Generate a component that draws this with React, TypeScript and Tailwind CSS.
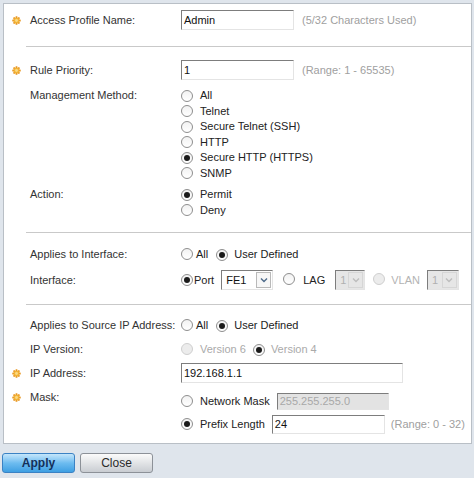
import React from "react"

// required-field marker (small orange sunburst)
function Star() {
  return (
    <svg width="9" height="9" viewBox="0 0 16 16" className="shrink-0">
      <g fill="#e8951e">
        {[0, 45, 90, 135].map((a) => (
          <rect key={a} x="6.3" y="0.5" width="3.4" height="15" rx="1" transform={`rotate(${a} 8 8)`} />
        ))}
      </g>
      <circle cx="8" cy="8" r="5" fill="#f2b437" />
      <circle cx="8" cy="8" r="2.6" fill="#fbd983" />
    </svg>
  )
}

function Radio({ checked = false, disabled = false }: { checked?: boolean; disabled?: boolean }) {
  return (
    <span
      className={`inline-flex h-[12px] w-[12px] shrink-0 items-center justify-center rounded-full border ${
        disabled ? "border-[#cfcfcf] bg-[#ececec]" : "border-[#8e8e8e] bg-gradient-to-b from-[#f2f2f2] to-white"
      }`}
    >
      {checked && <span className={`h-[6px] w-[6px] rounded-full ${disabled ? "bg-[#bdbdbd]" : "bg-[#1b1b1b]"}`} />}
    </span>
  )
}

function Label({ text, required = false }: { text: string; required?: boolean }) {
  return (
    <div className="flex w-[177px] shrink-0 items-center pl-[8px] text-[#333]">
      <span className="flex w-[18px] items-center">{required && <Star />}</span>
      <span>{text}</span>
    </div>
  )
}

function TextBox({ value, className, disabled = false }: { value: string; className: string; disabled?: boolean }) {
  return (
    <div
      className={`flex items-center border border-t-[#7d7d7d] border-l-[#7d7d7d] border-r-[#e4e4e4] border-b-[#e4e4e4] pl-[2px] ${
        disabled ? "bg-[#e3e3e3] text-[#a8a8a8]" : "bg-white text-[#111]"
      } ${className}`}
    >
      {value}
    </div>
  )
}

function Select({ value, className, disabled = false }: { value: string; className: string; disabled?: boolean }) {
  return (
    <div
      className={`flex h-[20px] items-center border border-t-[#7d7d7d] border-l-[#7d7d7d] border-r-[#e4e4e4] border-b-[#e4e4e4] ${
        disabled ? "bg-[#e6e6e6] text-[#b0b0b0]" : "bg-white text-[#111]"
      } ${className}`}
    >
      <span className="flex-1 pl-[4px]">{value}</span>
      <span
        className={`mr-[1px] flex h-[16px] w-[15px] items-center justify-center border ${
          disabled ? "border-[#d6d6d6]" : "border-[#b9b9b9] bg-[#f7f7f7]"
        }`}
      >
        <svg width="8" height="6" viewBox="0 0 8 6">
          <path d="M1 1.5 L4 4.5 L7 1.5" fill="none" stroke={disabled ? "#bdbdbd" : "#4d6a8a"} strokeWidth="1.4" />
        </svg>
      </span>
    </div>
  )
}

function Option({ text, checked = false }: { text: string; checked?: boolean }) {
  return (
    <div className="flex h-[15.5px] items-center gap-[7px] text-[#222]">
      <Radio checked={checked} />
      <span>{text}</span>
    </div>
  )
}

const Hint = ({ text, className = "" }: { text: string; className?: string }) => (
  <span className={`text-[#a0a0a0] ${className}`}>{text}</span>
)

const Separator = ({ className }: { className: string }) => <div className={`ml-[22px] h-px bg-[#c9c9c9] ${className}`} />

export default function App() {
  return (
    <div className="h-[478px] w-[474px] overflow-hidden bg-[#dfe5ec] pl-[3px] pt-[3px] text-[11px] leading-[13px] [font-family:'Liberation_Sans',Arial,sans-serif]">
      <div className="box-border h-[441px] w-[469px] border border-[#b9bfc6] bg-white pt-[4px]">
        <div className="flex h-[24px] items-center">
          <Label text="Access Profile Name:" required />
          <TextBox value="Admin" className="h-[20px] w-[113px]" />
          <Hint text="(5/32 Characters Used)" className="ml-[8px]" />
        </div>

        <Separator className="mt-[14px]" />

        <div className="mt-[11px] flex h-[24px] items-center">
          <Label text="Rule Priority:" required />
          <TextBox value="1" className="h-[20px] w-[113px]" />
          <Hint text="(Range: 1 - 65535)" className="ml-[8px]" />
        </div>

        <div className="mt-[6px] flex items-start">
          <div className="flex h-[15.5px] items-center">
            <Label text="Management Method:" />
          </div>
          <div className="flex flex-col">
            <Option text="All" />
            <Option text="Telnet" />
            <Option text="Secure Telnet (SSH)" />
            <Option text="HTTP" />
            <Option text="Secure HTTP (HTTPS)" checked />
            <Option text="SNMP" />
          </div>
        </div>

        <div className="mt-[6px] flex items-start">
          <div className="flex h-[15.5px] items-center">
            <Label text="Action:" />
          </div>
          <div className="flex flex-col">
            <Option text="Permit" checked />
            <Option text="Deny" />
          </div>
        </div>

        <Separator className="mt-[14px]" />

        <div className="mt-[11px] flex h-[20px] items-center text-[#222]">
          <Label text="Applies to Interface:" />
          <Radio />
          <span className="ml-[3px]">All</span>
          <span className="ml-[8px]">
            <Radio checked />
          </span>
          <span className="ml-[6px]">User Defined</span>
        </div>

        <div className="mt-[4px] flex h-[24px] items-center text-[#222]">
          <Label text="Interface:" />
          <Radio checked />
          <span className="ml-[1px]">Port</span>
          <Select value="FE1" className="ml-[7px] w-[52px]" />
          <span className="ml-[10px]">
            <Radio />
          </span>
          <span className="ml-[8px]">LAG</span>
          <Select value="1" disabled className="ml-[10px] w-[30px]" />
          <span className="ml-[8px]">
            <Radio disabled />
          </span>
          <span className="ml-[6px] text-[#b3b3b3]">VLAN</span>
          <Select value="1" disabled className="ml-[7px] w-[32px]" />
        </div>

        <Separator className="mt-[12px]" />

        <div className="mt-[10px] flex h-[20px] items-center text-[#222]">
          <Label text="Applies to Source IP Address:" />
          <Radio />
          <span className="ml-[3px]">All</span>
          <span className="ml-[8px]">
            <Radio checked />
          </span>
          <span className="ml-[6px]">User Defined</span>
        </div>

        <div className="mt-[4px] flex h-[20px] items-center">
          <Label text="IP Version:" />
          <Radio disabled />
          <span className="ml-[7px] text-[#aaaaaa]">Version 6</span>
          <span className="ml-[7px]">
            <Radio checked />
          </span>
          <span className="ml-[6px] text-[#aaaaaa]">Version 4</span>
        </div>

        <div className="mt-[2px] flex h-[24px] items-center">
          <Label text="IP Address:" required />
          <TextBox value="192.168.1.1" className="h-[20px] w-[222px]" />
        </div>

        <div className="mt-[7px] flex items-start">
          <div className="-mt-[1px] flex h-[12px] items-center">
            <Label text="Mask:" required />
          </div>
          <div className="flex flex-col text-[#222]">
            <div className="flex h-[18px] items-center">
              <Radio />
              <span className="ml-[7px]">Network Mask</span>
              <TextBox value="255.255.255.0" disabled className="ml-[7px] h-[17px] w-[112px]" />
            </div>
            <div className="mt-[4px] flex h-[20px] items-center">
              <Radio checked />
              <span className="ml-[7px]">Prefix Length</span>
              <TextBox value="24" className="ml-[7px] h-[19px] w-[113px]" />
              <Hint text="(Range: 0 - 32)" className="ml-[6px]" />
            </div>
          </div>
        </div>
      </div>

      <div className="mt-[9px] flex gap-[5px] text-[12px]">
        <button className="-ml-[1px] h-[20px] w-[73px] rounded-[3px] border border-[#3b82c4] bg-gradient-to-b from-[#c4e6fb] via-[#6dbcf0] to-[#3d9fe2] font-bold text-[#14305a]">
          Apply
        </button>
        <button className="h-[20px] w-[73px] rounded-[3px] border border-[#8c9198] bg-gradient-to-b from-[#fbfbfb] to-[#c9cdd2] text-[#2a2a2a]">
          Close
        </button>
      </div>
    </div>
  )
}
